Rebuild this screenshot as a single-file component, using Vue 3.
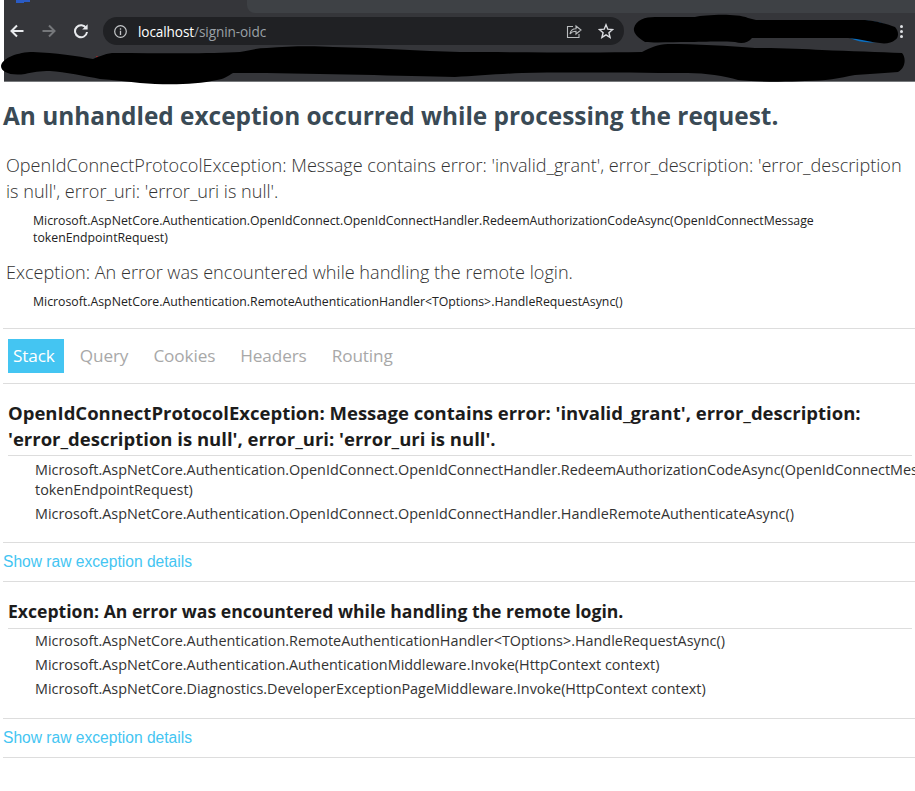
<script setup>
const tabs = ['Stack', 'Query', 'Cookies', 'Headers', 'Routing']
const sections = [
  {
    title: "OpenIdConnectProtocolException: Message contains error: 'invalid_grant', error_description: 'error_description is null', error_uri: 'error_uri is null'.",
    frames: [
      'Microsoft.AspNetCore.Authentication.OpenIdConnect.OpenIdConnectHandler.RedeemAuthorizationCodeAsync(OpenIdConnectMessage tokenEndpointRequest)',
      'Microsoft.AspNetCore.Authentication.OpenIdConnect.OpenIdConnectHandler.HandleRemoteAuthenticateAsync()'
    ]
  },
  {
    title: 'Exception: An error was encountered while handling the remote login.',
    frames: [
      'Microsoft.AspNetCore.Authentication.RemoteAuthenticationHandler<TOptions>.HandleRequestAsync()',
      'Microsoft.AspNetCore.Authentication.AuthenticationMiddleware.Invoke(HttpContext context)',
      'Microsoft.AspNetCore.Diagnostics.DeveloperExceptionPageMiddleware.Invoke(HttpContext context)'
    ]
  }
]
</script>

<template>
  <div class="page">
    <header class="chrome">
      <div class="tabstrip"><div class="tabfill"></div></div>
      <div class="toolbar">
        <svg class="nav" viewBox="0 0 16 16" width="16" height="16"><path d="M14.5 8H2.5M8 2.5L2.5 8L8 13.5" fill="none" stroke="#e8eaed" stroke-width="2"/></svg>
        <svg class="nav" viewBox="0 0 16 16" width="16" height="16"><path d="M1.5 8H13.5M8 2.5L13.5 8L8 13.5" fill="none" stroke="#75777a" stroke-width="2"/></svg>
        <svg class="nav" viewBox="0 0 16 16" width="16" height="16"><path d="M13.2 5.2A6 6 0 1 0 14 9" fill="none" stroke="#e8eaed" stroke-width="2"/><path d="M14.6 1.2V6.6H9.2Z" fill="#e8eaed"/></svg>
        <div class="omnibox">
          <svg viewBox="0 0 16 16" width="15" height="15"><circle cx="8" cy="8" r="6.2" fill="none" stroke="#c4c7c9" stroke-width="1.3"/><path d="M8 7.2V11.6M8 4.5V6" stroke="#c4c7c9" stroke-width="1.4"/></svg>
          <span class="url"><b>localhost</b><span>/signin-oidc</span></span>
          <svg class="share" viewBox="0 0 16 16" width="16" height="16"><path d="M7 3.5H1.5V14.5H13V11" fill="none" stroke="#b9bcbe" stroke-width="1.1"/><path d="M4 11C4.5 7.5 7 5.8 10 5.8V3L15 7L10 11V8.3C7.7 8.3 5.5 9 4 11Z" fill="none" stroke="#b9bcbe" stroke-width="1.1"/></svg>
          <svg class="star" viewBox="0 0 16 16" width="16" height="16"><path d="M8 1.8L9.8 6.2L14.6 6.6L10.9 9.7L12.1 14.4L8 11.8L3.9 14.4L5.1 9.7L1.4 6.6L6.2 6.2Z" fill="none" stroke="#dadce0" stroke-width="1.4"/></svg>
        </div>
        <div class="dots"><i></i><i></i><i></i></div>
      </div>
      <svg class="redact" viewBox="0 0 915 90" width="915" height="90">
        <path d="M16 0H30V2H24V3H16Z" fill="#2a5bc4"/>
        <path d="M850 22C868 19 882 22 888 26L884 41C870 44 858 42 850 38Z" fill="#0a6fc2"/>
        <path d="M96 56L106 60L100 64Z" fill="#d22"/>
        <path d="M634 28C636 20 645 17 655 17L695 17C705 15 735 13 748 18L756 20H865C875 21 888 24 895 27C899 31 899 38 895 40C892 43 885 44 880 43C870 42 860 39 848 38L752 38C748 43 742 44 735 42C720 41 700 42 688 42C675 42 655 43 645 42C638 38 633 33 634 28Z" fill="#000"/>
        <path d="M1 66C2 58 18 52 33 52C55 53 78 56 93 59C98 57 104 54 112 53C160 53 210 54 240 52C250 50 258 48 267 48C290 46 315 46 333 47C380 48 420 51 460 52C520 52 590 53 642 52C650 48 658 44 668 44C695 44 730 46 755 48C780 48 805 49 822 50C850 51 880 52 902 53C906 57 906 68 898 72C885 73 870 74 855 75C840 78 825 81 805 81C785 82 760 82 738 80C725 76 705 73 688 73C630 73 570 72 522 73C500 74 475 76 455 77C400 76 300 73 233 73C228 76 224 79 217 80C195 85 165 85 140 83C125 81 112 80 100 79C85 76 65 72 50 71C40 71 33 72 25 74C10 76 1 72 1 66Z" fill="#000"/>
      </svg>
    </header>

    <main class="content">
      <h1>An unhandled exception occurred while processing the request.</h1>

      <div class="summary">
        <h2>OpenIdConnectProtocolException: Message contains error: 'invalid_grant', error_description: 'error_description is null', error_uri: 'error_uri is null'.</h2>
        <p>Microsoft.AspNetCore.Authentication.OpenIdConnect.OpenIdConnectHandler.RedeemAuthorizationCodeAsync(OpenIdConnectMessage tokenEndpointRequest)</p>
      </div>
      <div class="summary second">
        <h2>Exception: An error was encountered while handling the remote login.</h2>
        <p>Microsoft.AspNetCore.Authentication.RemoteAuthenticationHandler&lt;TOptions&gt;.HandleRequestAsync()</p>
      </div>

      <nav class="tabs">
        <span v-for="(t, i) in tabs" :key="t" class="tab" :class="{ active: i === 0 }">{{ t }}</span>
      </nav>

      <section v-for="(s, i) in sections" :key="i" class="stack" :class="'stack' + i">
        <h3>{{ s.title }}</h3>
        <ul>
          <li v-for="f in s.frames" :key="f">{{ f }}</li>
        </ul>
        <div class="raw"><a>Show raw exception details</a></div>
      </section>
    </main>
  </div>
</template>

<style>
html, body { margin: 0; background: #fff; overflow: hidden; }
</style>

<style scoped>
.page { width: 915px; height: 791px; overflow: hidden; font-family: "Open Sans", "Liberation Sans", sans-serif; background: #fff; }
.chrome { position: relative; margin-left: 4px; height: 82px; background: #35363a; border-bottom: 1px solid #77797c; box-sizing: border-box; }
.tabstrip { height: 13px; display: flex; justify-content: flex-end; }
.tabfill { width: 668px; height: 13px; background: #3e4145; border-bottom-left-radius: 8px; }
.toolbar { display: flex; align-items: center; height: 28px; margin-top: 4px; padding-left: 5px; position: relative; }
.nav { margin-right: 16px; flex: none; }
.nav:nth-child(3) { margin-right: 14px; }
.omnibox { width: 521px; height: 28px; border-radius: 14px; background: #202124; display: flex; align-items: center; padding: 0 10px; box-sizing: border-box; }
.url { margin-left: 10px; flex: 1; font-size: 13.6px; font-family: "Open Sans", sans-serif; color: #9aa0a6; letter-spacing: -0.1px; }
.url b { font-weight: 400; color: #fff; }
.share { margin-right: 16px; }
.dots { position: absolute; right: 12px; top: 8px; display: flex; flex-direction: column; gap: 2px; }
.dots i { width: 3px; height: 3px; background: #dfe1e5; border-radius: 50%; }
.redact { position: absolute; left: -4px; top: 0; overflow: visible; }

.content { padding: 0 0 0 3px; }
h1 { margin: 19px 0 0; font-size: 24.4px; line-height: 30px; font-weight: 700; color: #3a4a55; }
.summary { padding-left: 3px; margin-top: 21px; }
.summary.second { margin-top: 13px; }
.summary h2 { margin: 0; font-size: 18.1px; line-height: 26px; font-weight: 300; color: #333; }
.summary p { margin: 8px 0 0 27px; font-size: 12.3px; line-height: 17px; color: #222; }
.tabs { display: flex; margin-top: 18px; padding: 10px 0 10px 5px; border-top: 1px solid #ddd; border-bottom: 1px solid #ddd; }
.tab { padding: 5px 9px 5px 5px; font-size: 17.2px; line-height: 24px; color: #a8a8a8; margin-right: 11px; letter-spacing: -0.12px; }
.tab.active { background: #44c5f2; color: #fff; }
.stack h3 { margin: 0 3px 0 5px; padding: 16px 0 3px; font-size: 18.5px; line-height: 26px; font-weight: 700; color: #1c1c1c; border-bottom: 1px solid #ddd; }
.stack ul { margin: 0; padding: 4px 0 0 32px; list-style: none; font-size: 14.4px; line-height: 20px; color: #333; }
.stack li { width: 960px; margin-bottom: 4px; }
.raw { margin-top: 18px; border-top: 1px solid #ddd; border-bottom: 1px solid #ddd; padding: 9px 0 9px; font-family: "Liberation Sans", sans-serif; font-size: 15.6px; line-height: 20px; color: #44c5f2; }
.stack1 h3 { font-size: 17.6px; padding-bottom: 4px; }
.stack1 ul { padding-top: 2px; }
.stack1 .raw { margin-top: 19px; }
</style>
